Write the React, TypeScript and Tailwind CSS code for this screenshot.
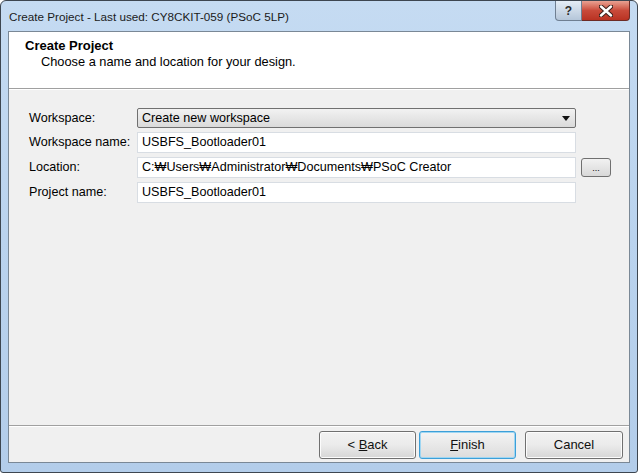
const font = { fontFamily: '"Liberation Sans", Arial, sans-serif' };

const rows = [
  { label: "Workspace name:", value: "USBFS_Bootloader01" },
  { label: "Location:", value: "C:₩Users₩Administrator₩Documents₩PSoC Creator", browse: true },
  { label: "Project name:", value: "USBFS_Bootloader01" },
];

function WinButton({ children, focused }: { children: React.ReactNode; focused?: boolean }) {
  return (
    <button
      className={
        "h-[28px] rounded-[3px] border bg-gradient-to-b text-[13px] text-[#111] " +
        (focused
          ? "border-[#3c9fd8] from-[#f4f4f4] to-[#dcdcdc] shadow-[inset_0_0_0_1px_#9fd6f2]"
          : "border-[#707070] from-[#f2f2f2] via-[#ebebeb] to-[#d6d6d6] shadow-[inset_0_0_0_1px_#fcfcfc]")
      }
    >
      {children}
    </button>
  );
}

export default function App() {
  return (
    <div
      style={font}
      className="flex h-[473px] w-[638px] flex-col rounded-t-[6px] rounded-b-[3px] border border-[#3d4650] bg-gradient-to-b from-[#c5dbf2] via-[#bad3ee] to-[#b3cdea] text-[12.6px] text-black"
    >
      <div className="flex h-[30px] items-start">
        <div className="flex-1 pl-[8px] pt-[7px] text-[11.7px] text-[#1b1b1b]">
          Create Project - Last used: CY8CKIT-059 (PSoC 5LP)
        </div>
        <div className="mr-[7px] flex h-[20px]">
          <div className="flex w-[27px] items-center justify-center rounded-bl-[4px] border border-t-0 border-[#6f7f92] bg-gradient-to-b from-[#e4edf6] to-[#b5c6d9] text-[12px] font-bold text-[#2a2a2a]">
            ?
          </div>
          <div className="flex w-[48px] items-center justify-center rounded-br-[4px] border border-l-0 border-t-0 border-[#6d2b25] bg-gradient-to-b from-[#e8a192] via-[#c94a3a] to-[#b93222]">
            <svg width="14" height="12" viewBox="0 0 14 12">
              <path d="M2 1.5l10 9M12 1.5l-10 9" stroke="#3a1f1a" strokeWidth="4.5" strokeLinecap="round" />
              <path d="M2 1.5l10 9M12 1.5l-10 9" stroke="#fff" strokeWidth="2.4" strokeLinecap="round" />
            </svg>
          </div>
        </div>
      </div>

      <div className="mx-[7px] flex h-[432px] flex-col border border-[#7a8896] bg-[#f0f0f0]">
        <div className="h-[56px] bg-white pl-[16px] pt-[6px]">
          <div className="text-[13px] font-bold leading-[16px]">Create Project</div>
          <div className="pl-[16px] text-[12.8px] leading-[16px]">Choose a name and location for your design.</div>
        </div>
        <div className="h-px bg-[#a0a0a0]" />
        <div className="h-px bg-white" />

        <div className="flex flex-1 flex-col gap-[4px] pl-[20px] pt-[18px]">
          <div className="flex items-center">
            <div className="w-[108px]">Workspace:</div>
            <div className="flex h-[20px] w-[439px] items-center rounded-[2px] border border-[#707070] bg-gradient-to-b from-[#f2f2f2] to-[#dadada] pl-[4px] pr-[5px]">
              <span className="flex-1">Create new workspace</span>
              <svg width="8" height="5" viewBox="0 0 8 5">
                <path d="M0 0h8L4 5z" fill="#111" />
              </svg>
            </div>
          </div>
          {rows.map((row) => (
            <div key={row.label} className="flex items-center">
              <div className="w-[108px]">{row.label}</div>
              <div className="flex h-[21px] w-[439px] items-center border border-[#d8dde3] bg-white pl-[4px]">
                {row.value}
              </div>
              {row.browse && (
                <div className="ml-[5px] flex h-[19px] w-[30px] items-end justify-center rounded-[3px] border border-[#707070] bg-gradient-to-b from-[#f2f2f2] to-[#d8d8d8] pb-[3px] text-[9px] leading-none">
                  ...
                </div>
              )}
            </div>
          ))}
        </div>

        <div className="h-px bg-[#a0a0a0]" />
        <div className="h-px bg-white" />
        <div className="flex h-[35px] items-start justify-end pr-[6px] pt-[4px]">
          <div className="flex gap-[3px]">
            <div className="flex w-[97px] flex-col">
              <WinButton>
                &lt; <span className="underline">B</span>ack
              </WinButton>
            </div>
            <div className="flex w-[97px] flex-col">
              <WinButton focused>
                <span className="underline">F</span>inish
              </WinButton>
            </div>
          </div>
          <div className="ml-[9px] flex w-[98px] flex-col">
            <WinButton>Cancel</WinButton>
          </div>
        </div>
      </div>
    </div>
  );
}
